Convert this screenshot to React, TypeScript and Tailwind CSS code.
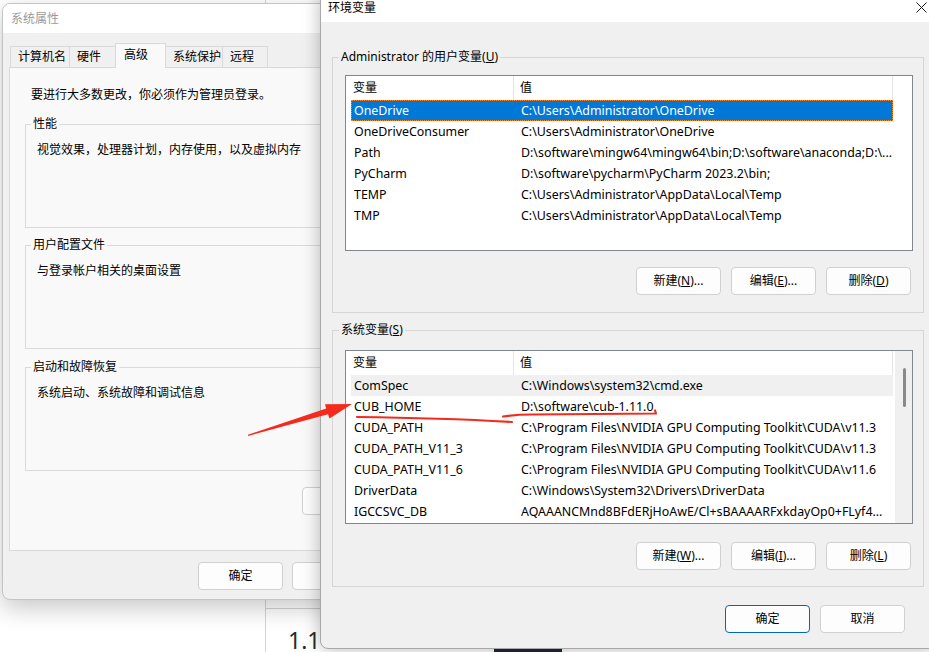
import React from 'react';

// Two stacked Windows dialogs: 系统属性 (behind) and 环境变量 (front), plus red annotations.

const UI = "font-['Noto_Sans','Noto_Sans_CJK_SC',sans-serif]";

type Row = [string, string];

const USER_VARS: Row[] = [
  ['OneDrive', 'C:\\Users\\Administrator\\OneDrive'],
  ['OneDriveConsumer', 'C:\\Users\\Administrator\\OneDrive'],
  ['Path', 'D:\\software\\mingw64\\mingw64\\bin;D:\\software\\anaconda;D:\\...'],
  ['PyCharm', 'D:\\software\\pycharm\\PyCharm 2023.2\\bin;'],
  ['TEMP', 'C:\\Users\\Administrator\\AppData\\Local\\Temp'],
  ['TMP', 'C:\\Users\\Administrator\\AppData\\Local\\Temp'],
];

const SYS_VARS: Row[] = [
  ['ComSpec', 'C:\\Windows\\system32\\cmd.exe'],
  ['CUB_HOME', 'D:\\software\\cub-1.11.0'],
  ['CUDA_PATH', 'C:\\Program Files\\NVIDIA GPU Computing Toolkit\\CUDA\\v11.3'],
  ['CUDA_PATH_V11_3', 'C:\\Program Files\\NVIDIA GPU Computing Toolkit\\CUDA\\v11.3'],
  ['CUDA_PATH_V11_6', 'C:\\Program Files\\NVIDIA GPU Computing Toolkit\\CUDA\\v11.6'],
  ['DriverData', 'C:\\Windows\\System32\\Drivers\\DriverData'],
  ['IGCCSVC_DB', 'AQAAANCMnd8BFdERjHoAwE/Cl+sBAAAARFxkdayOp0+FLyf4...'],
];

function Btn({ children, primary = false }: { children: React.ReactNode; primary?: boolean }) {
  return (
    <button
      type="button"
      className={
        primary
          ? 'h-[28px] w-[85px] shrink-0 rounded-[4px] border border-[#0067c0] bg-[#fdfdfd] text-[12px] leading-none text-black'
          : 'h-[28px] w-[85px] shrink-0 rounded-[4px] border border-[#d0d0d0] bg-[#fdfdfd] text-[12px] leading-none text-black'
      }
    >
      {children}
    </button>
  );
}

function VarList({ rows, selected, hover, height, scroll }: {
  rows: Row[]; selected?: number; hover?: number; height: string; scroll?: boolean;
}) {
  return (
    <div className={`${height} ml-[12px] flex w-[568px] border border-[#82878f] bg-white`}>
      <div className="min-w-0 flex-1 overflow-hidden">
        <div className="flex h-[24px] w-[547px] items-center text-[12px] text-black">
          <div className="flex h-full w-[168px] items-center border-r border-[#e5e5e5] pl-[7px]">变量</div>
          <div className="flex h-full flex-1 items-center border-r border-[#e5e5e5] pl-[6px]">值</div>
        </div>
        {rows.map(([k, v], i) => {
          const sel = i === selected;
          const hov = i === hover;
          return (
            <div
              key={k}
              className={
                sel
                  ? 'ml-[5px] flex h-[21px] w-[542px] items-center border border-dotted border-[#ff8728] bg-[#0078d7] pt-[1px] text-[12.4px] text-white'
                  : hov
                    ? 'ml-[5px] flex h-[21px] w-[542px] items-center border border-transparent bg-[#f0f0f0] pt-[1px] text-[12.4px] text-black'
                    : 'ml-[5px] flex h-[21px] w-[542px] items-center border border-transparent pt-[1px] text-[12.4px] text-black'
              }
            >
              <div className="w-[162px] shrink-0 overflow-hidden whitespace-nowrap pl-[2px]">{k}</div>
              <div className="min-w-0 flex-1 overflow-hidden whitespace-nowrap pl-[7px]">{v}</div>
            </div>
          );
        })}
      </div>
      {scroll && (
        <div className="flex w-[17px] shrink-0 justify-center bg-[#f0f0f0]">
          <div className="mt-[17px] ml-[1px] h-[39px] w-[3px] rounded-full bg-[#8a8a8a]" />
        </div>
      )}
    </div>
  );
}

function SystemProperties() {
  const tabs: { label: string; w: string; active?: boolean }[] = [
    { label: '计算机名', w: 'w-[60px]' },
    { label: '硬件', w: 'w-[47px]' },
    { label: '高级', w: 'w-[51px]', active: true },
    { label: '系统保护', w: 'w-[58px]' },
    { label: '远程', w: 'w-[46px]' },
  ];
  const groups = [
    { title: '性能', text: '视觉效果，处理器计划，内存使用，以及虚拟内存', mt: 'mt-[13px]' },
    { title: '用户配置文件', text: '与登录帐户相关的桌面设置', mt: 'mt-[9px]' },
    { title: '启动和故障恢复', text: '系统启动、系统故障和调试信息', mt: 'mt-[10px]' },
  ];
  return (
    <div className="absolute left-[2px] top-[3px] flex h-[597px] w-[380px] flex-col overflow-hidden rounded-[8px] border border-[#c4c4c4] bg-[#f0f0f0] shadow-[0_8px_24px_rgba(0,0,0,0.22)]">
      <div className="h-[29px] shrink-0 bg-white pl-[8px] text-[12px] leading-[29px] text-[#9a9a9a]">系统属性</div>
      <div className="pl-[6px] pt-[10px]">
        <div className="flex items-end pl-[1px]">
          {tabs.map((t) =>
            t.active ? (
              <div key={t.label} className={`${t.w} relative z-10 -mb-px -ml-px h-[25px] border border-b-0 border-[#d9d9d9] bg-[#f9f9f9] pl-[8px] pt-[3px] text-[12px] leading-[16px] text-black`}>
                {t.label}
              </div>
            ) : (
              <div key={t.label} className={`${t.w} -ml-px h-[21px] border border-b-0 border-[#d9d9d9] bg-[#f0f0f0] pl-[7px] pt-[2px] text-[12px] leading-[16px] text-black first:ml-0`}>
                {t.label}
              </div>
            ),
          )}
        </div>
        <div className="h-[484px] border border-[#d9d9d9] bg-[#f9f9f9]">
          <p className="pl-[21px] pt-[19px] text-[12px] leading-[16px] text-black">要进行大多数更改，你必须作为管理员登录。</p>
          {groups.map((g) => (
            <fieldset key={g.title} className={`${g.mt} ml-[15px] h-[112px] w-[340px] border border-[#dadada]`}>
              <legend className="ml-[5px] px-[2px] text-[12px] leading-[16px] text-black">{g.title}</legend>
              <div className="mt-[10px] pl-[11px] text-[12px] leading-[16px] text-black">{g.text}</div>
            </fieldset>
          ))}
          <div className="ml-[292px] mt-[16px] h-[28px] w-[85px] rounded-[4px] border border-[#d0d0d0] bg-[#fdfdfd]" />
        </div>
        <div className="ml-[189px] mt-[11px] flex gap-[9px]">
          <Btn>确定</Btn>
          <Btn>取消</Btn>
        </div>
      </div>
    </div>
  );
}

function EnvironmentVariables() {
  return (
    <div className="absolute left-[320px] top-[-8px] z-10 flex h-[657px] w-[616px] flex-col overflow-hidden rounded-b-[8px] border border-[#a8a8a8] bg-[#f0f0f0] shadow-[0_0_18px_rgba(0,0,0,0.28)]">
      <div className="flex h-[29px] shrink-0 items-center justify-between bg-white pl-[7px] pr-[8px] text-[12px] text-black">
        <span>环境变量</span>
        <svg width="11" height="11" viewBox="0 0 11 11" className="-mt-[1px]">
          <path d="M0.5 0.5 L10.5 10.5 M10.5 0.5 L0.5 10.5" stroke="#1a1a1a" strokeWidth="1" fill="none" />
        </svg>
      </div>
      <div className="pl-[11px]">
        <fieldset className="mt-[27px] h-[264px] w-[592px] border border-[#d5d5d5]">
          <legend className="ml-[6px] px-[2px] text-[12px] leading-[16px] text-black">
            Administrator 的用户变量(<span className="underline">U</span>)
          </legend>
          <div className="mt-[10px]">
            <VarList rows={USER_VARS} selected={0} height="h-[176px]" />
          </div>
          <div className="mt-[16px] flex justify-end gap-[10px] pr-[12px]">
            <Btn>新建(<span className="underline">N</span>)...</Btn>
            <Btn>编辑(<span className="underline">E</span>)...</Btn>
            <Btn>删除(<span className="underline">D</span>)</Btn>
          </div>
        </fieldset>
        <fieldset className="mt-[9px] h-[265px] w-[592px] border border-[#d5d5d5]">
          <legend className="ml-[6px] px-[2px] text-[12px] leading-[16px] text-black">
            系统变量(<span className="underline">S</span>)
          </legend>
          <div className="mt-[12px]">
            <VarList rows={SYS_VARS} hover={0} height="h-[174px]" scroll />
          </div>
          <div className="mt-[18px] flex justify-end gap-[10px] pr-[12px]">
            <Btn>新建(<span className="underline">W</span>)...</Btn>
            <Btn>编辑(<span className="underline">I</span>)...</Btn>
            <Btn>删除(<span className="underline">L</span>)</Btn>
          </div>
        </fieldset>
      </div>
      <div className="mt-[18px] flex justify-end gap-[10px] pr-[30px]">
        <Btn primary>确定</Btn>
        <Btn>取消</Btn>
      </div>
    </div>
  );
}

export default function App() {
  return (
    <div className={`${UI} relative h-[652px] w-[929px] overflow-hidden bg-white`}>
      {/* desktop behind the dialogs */}
      <div className="absolute left-[265px] top-0 h-full w-px bg-[#d4d4d4]" />
      <div className="absolute left-[265px] top-[608px] h-px w-[60px] bg-[#d4d4d4]" />
      <div className="absolute left-[288px] top-[626px] text-[23px] leading-[28px] text-[#2a2a2a]">1.1</div>
      <div className="absolute left-[494px] top-[649px] h-[3px] w-[68px] bg-[#1e2735]" />

      <SystemProperties />
      <EnvironmentVariables />

      {/* red annotations */}
      <svg className="pointer-events-none absolute left-0 top-0 z-20" width="929" height="652" viewBox="0 0 929 652">
        <polygon
          points="248,436 328,414.3 329.5,418.5 352,404 325,404.3 326.2,408.5 248,434.8"
          fill="#f42b1c"
        />
        <path
          d="M357 417 C400 417.5 460 419 512 422 M503 416.5 Q516 414.5 532 414.5 L656 413.5 L655 410.5"
          stroke="#f42b1c"
          strokeWidth="2.2"
          strokeLinecap="round"
          strokeLinejoin="round"
          fill="none"
        />
      </svg>
    </div>
  );
}
